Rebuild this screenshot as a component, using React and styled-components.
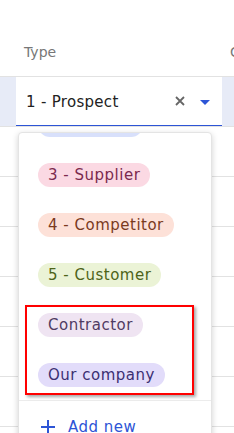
import React, { useLayoutEffect, useRef } from "react";
import styled, { createGlobalStyle } from "styled-components";

const GlobalStyle = createGlobalStyle`
  * {
    box-sizing: border-box;
  }

  html, body {
    margin: 0;
    padding: 0;
    background: #fff;
    overflow: hidden;
    font-family: "DejaVu Sans", "Noto Sans", sans-serif;
  }
`;

const Table = styled.div`
  width: 234px;
  height: 433px;
  overflow: hidden;
`;

const Row = styled.div`
  display: grid;
  grid-template-columns: 16px 206px 60px;
  height: ${(p) => p.$height}px;
  background: ${(p) => (p.$active ? "#e7ebf7" : "#fff")};
  border-bottom: 1px solid #e2e2e2;
`;

const HeadCell = styled.div`
  display: flex;
  align-items: center;
  padding: 28px 8px 0;
  font-size: 14px;
  color: #777;
  white-space: nowrap;
`;

const Cell = styled.div`
  position: relative;
`;

const SelectBox = styled.div`
  display: flex;
  align-items: center;
  height: 100%;
  padding: 0 12px 0 10px;
  background: #fff;
  border-bottom: 1px solid #2d55d6;
`;

const Value = styled.span`
  flex: 1;
  font-size: 15px;
  letter-spacing: 0.3px;
  color: #222;
  padding-top: 2px;
`;

const ClearBtn = styled.span`
  display: flex;
  margin-right: 15px;
`;

const Caret = styled.span`
  width: 0;
  height: 0;
  border-left: 5px solid transparent;
  border-right: 5px solid transparent;
  border-top: 5px solid #2d55d6;
  margin-top: 3px;
`;

const Dropdown = styled.div`
  position: absolute;
  top: 55px;
  left: 2px;
  width: 194px;
  background: #fff;
  border: 1px solid #e4e4e4;
  border-radius: 4px;
  box-shadow: 0 2px 6px rgba(0, 0, 0, 0.18);
  z-index: 5;
`;

const List = styled.div`
  height: 267px;
  overflow: hidden;
`;

const Option = styled.div`
  display: flex;
  align-items: center;
  height: 50px;
  padding-left: 19px;
`;

const Pill = styled.span`
  display: inline-flex;
  align-items: center;
  height: 24px;
  padding: 0 10px;
  border-radius: 12px;
  font-size: 15px;
  letter-spacing: 0.5px;
  background: ${(p) => p.$bg};
  color: ${(p) => p.$fg};
  white-space: nowrap;
`;

const Highlight = styled.div`
  position: absolute;
  left: 6px;
  top: 172px;
  width: 169px;
  height: 90px;
  border: 2px solid #f00;
  box-shadow: 2px 2px 3px rgba(0, 0, 0, 0.35);
  pointer-events: none;
`;

const Footer = styled.div`
  display: flex;
  align-items: center;
  gap: 13px;
  height: 50px;
  padding: 2px 0 0 22px;
  border-top: 1px solid #ececec;
  color: #2d55d6;
  font-size: 15px;
  letter-spacing: 0.5px;
`;

const options = [
  { label: "1 - Prospect", bg: "#dde6fb", fg: "#2c3f7a" },
  { label: "2 - Partner", bg: "#d8e0fb", fg: "#2c3f7a" },
  { label: "3 - Supplier", bg: "#fbd9e3", fg: "#7b2a4e" },
  { label: "4 - Competitor", bg: "#fde1d8", fg: "#7a3a1e" },
  { label: "5 - Customer", bg: "#ebf3d6", fg: "#4d6319" },
  { label: "Contractor", bg: "#efe4f2", fg: "#4f3b63" },
  { label: "Our company", bg: "#e2dcfa", fg: "#3b2f72" },
];

const App = () => {
  const listRef = useRef(null);

  useLayoutEffect(() => {
    if (listRef.current) listRef.current.scrollTop = 84;
  }, []);

  return (
    <>
      <GlobalStyle />
      <Table>
        <Row $height={77}>
          <HeadCell />
          <HeadCell>Type</HeadCell>
          <HeadCell>Country</HeadCell>
        </Row>
        <Row $height={50} $active>
          <Cell />
          <Cell>
            <SelectBox>
              <Value>1 - Prospect</Value>
              <ClearBtn>
                <svg width="10" height="10" viewBox="0 0 10 10">
                  <path d="M1 1L9 9M9 1L1 9" stroke="#666" strokeWidth="1.8" />
                </svg>
              </ClearBtn>
              <Caret />
            </SelectBox>
            <Dropdown>
              <List ref={listRef}>
                {options.map((o) => (
                  <Option key={o.label}>
                    <Pill $bg={o.bg} $fg={o.fg}>{o.label}</Pill>
                  </Option>
                ))}
              </List>
              <Footer>
                <svg width="14" height="14" viewBox="0 0 14 14">
                  <path d="M7 0V14M0 7H14" stroke="#2d55d6" strokeWidth="2" />
                </svg>
                Add new
              </Footer>
              <Highlight />
            </Dropdown>
          </Cell>
          <Cell />
        </Row>
        {[0, 1, 2, 3, 4, 5].map((i) => (
          <Row key={i} $height={50}>
            <Cell />
            <Cell />
            <Cell />
          </Row>
        ))}
      </Table>
    </>
  );
};

export default App;
